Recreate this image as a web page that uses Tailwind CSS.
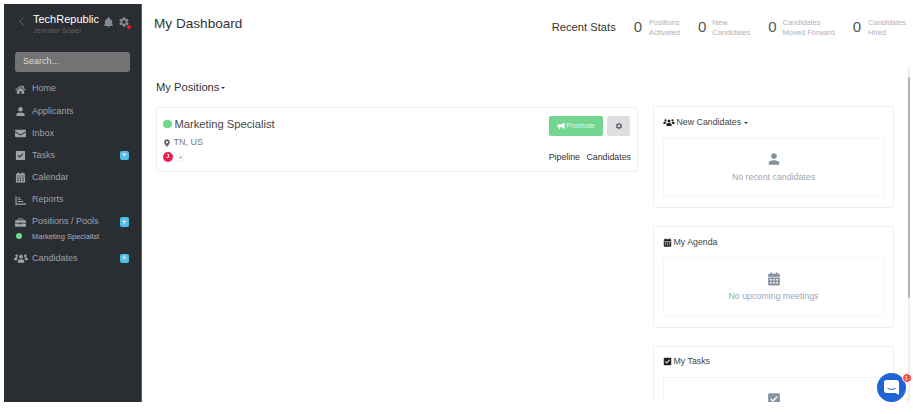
<!DOCTYPE html>
<html lang="en">
<head>
    <meta charset="UTF-8">
    <meta name="viewport" content="width=device-width, initial-scale=1.0">
    <script src="https://cdn.jsdelivr.net/npm/@tailwindcss/browser@4"></script>
    <title>My Dashboard</title>
</head>
<body class="bg-white font-['Liberation_Sans',Arial,sans-serif] overflow-hidden">

    <!-- icon sprite -->
    <svg class="hidden">
        <symbol id="i-home" viewBox="0 0 24 24"><path d="M12 3 0.5 12.6l1.3 1.6L12 5.8l10.2 8.4 1.3-1.6L19 8.9V4h-3v2.4zM4 14.6V21.5h6v-6h4v6h6v-6.9L12 8z"/></symbol>
        <symbol id="i-user" viewBox="0 0 24 24"><path d="M12 12c2.8 0 5-2.2 5-5s-2.2-5-5-5-5 2.200-5 5 2.200 5 5 5zm0 2c-4 0-9 1.800-9 4.500V22h18v-3.500c0-2.700-5-4.500-9-4.500z"/></symbol>
        <symbol id="i-mail" viewBox="0 0 24 24"><path d="M22 4H2C.9 4 0 4.900 0 6v1l12 7 12-7V6c0-1.100-.9-2-2-2zM0 9.500V18c0 1.100.9 2 2 2h20c1.100 0 2-.9 2-2V9.500l-12 7z"/></symbol>
        <symbol id="i-check" viewBox="0 0 24 24"><path d="M20 2H4C2.900 2 2 2.900 2 4v16c0 1.100.9 2 2 2h16c1.100 0 2-.9 2-2V4c0-1.100-.9-2-2-2zm-10 15-4.500-4.500 1.600-1.600 2.900 2.900 6.900-6.900 1.600 1.600z"/></symbol>
        <symbol id="i-cal" viewBox="0 0 24 24"><path fill-rule="evenodd" d="M6 1h3v2h6V1h3v2h2c1.100 0 2 .9 2 2v3H2V5c0-1.100.9-2 2-2h2zM2 9.500h20V21c0 1.100-.9 2-2 2H4c-1.100 0-2-.9-2-2zM5 12v2.500h3V12zm5.500 0v2.500h3V12zm5.500 0v2.500h3V12zM5 17v2.500h3V17zm5.500 0v2.500h3V17zm5.500 0v2.500h3V17z"/></symbol>
        <symbol id="i-chart" viewBox="0 0 24 24"><path d="M1 3h2.500v15.500H24V21H1zM6 13h12v2H6zm0-4h8v2H6zm0-4h5v2H6z"/></symbol>
        <symbol id="i-case" viewBox="0 0 24 24"><path fill-rule="evenodd" d="M8 3h8c1.100 0 2 .9 2 2v2h4c1.100 0 2 .9 2 2v3.500H0V9c0-1.100.9-2 2-2h4V5c0-1.100.9-2 2-2zm0 2v2h8V5zM0 14h9.500v2h5v-2H24v5c0 1.100-.9 2-2 2H2c-1.100 0-2-.9-2-2z"/></symbol>
        <symbol id="i-users" viewBox="0 0 30 24"><circle cx="15" cy="8" r="4"/><circle cx="5.500" cy="6" r="3"/><circle cx="24.500" cy="6" r="3"/><path d="M8 21v-3.500C8 15 11 13.500 15 13.500s7 1.500 7 4V21zM0 16v-3c0-1.800 2-3 5.500-3 1.200 0 2.200.2 3 .5-1.500 1-2.500 2.800-2.500 5.500zM30 16v-3c0-1.800-2-3-5.500-3-1.200 0-2.200.2-3 .5 1.500 1 2.500 2.800 2.500 5.500z"/></symbol>
        <symbol id="i-bell" viewBox="0 0 24 24"><path d="M12 23c1.400 0 2.500-1.100 2.500-2.500h-5C9.500 21.900 10.600 23 12 23zm8-6.500V11c0-3.600-2.200-6.500-5.500-7.300V3c0-1.400-1.100-2.500-2.500-2.500S9.500 1.600 9.500 3v.7C6.200 4.500 4 7.400 4 11v5.500L1.500 19v.5h21V19z"/></symbol>
        <symbol id="i-cog" viewBox="0 0 24 24"><path d="M19.140 12.940c.04-.3.06-.61.06-.94 0-.32-.02-.64-.07-.94l2.030-1.580c.18-.14.23-.41.12-.61l-1.920-3.320c-.12-.22-.37-.29-.59-.22l-2.390.96c-.5-.38-1.030-.7-1.620-.94l-.36-2.540c-.04-.24-.24-.41-.48-.41h-3.840c-.24 0-.43.17-.47.41l-.36 2.540c-.59.24-1.130.57-1.620.94l-2.390-.96c-.22-.08-.47 0-.59.22L2.740 8.870c-.12.21-.08.47.12.61l2.030 1.580c-.05.3-.09.63-.09.94s.02.64.07.94l-2.030 1.580c-.18.14-.23.41-.12.61l1.920 3.320c.12.22.37.29.59.22l2.390-.96c.5.38 1.030.7 1.620.94l.36 2.540c.05.24.24.41.48.41h3.840c.24 0 .44-.17.47-.41l.36-2.540c.59-.24 1.130-.56 1.620-.94l2.390.96c.22.08.47 0 .59-.22l1.920-3.320c.12-.22.07-.47-.12-.61l-2.010-1.580zM12 15.600c-1.980 0-3.600-1.620-3.600-3.600s1.620-3.600 3.600-3.600 3.600 1.620 3.600 3.600-1.620 3.600-3.600 3.600z"/></symbol>
        <symbol id="i-pin" viewBox="0 0 24 24"><path d="M12 1C7.200 1 3.500 4.700 3.500 9.500 3.500 15 12 23.500 12 23.500S20.500 15 20.500 9.500C20.500 4.700 16.800 1 12 1zm0 11.500c-1.700 0-3-1.300-3-3s1.300-3 3-3 3 1.300 3 3-1.300 3-3 3z"/></symbol>
        <symbol id="i-horn" viewBox="0 0 24 24"><path d="M22 2h-1.500L15 6.500H3c-1.100 0-2 .9-2 2v5c0 1.100.9 2 2 2h1.500L6.500 22h3.500l-1.800-6.500H15l5.500 4.500H22c.6 0 1-.4 1-1V3c0-.6-.4-1-1-1z"/></symbol>
    </svg>

    <div class="flex h-[414px] pt-[4px] pb-[12px] pl-[4px]">

        <!-- sidebar -->
        <aside class="w-[138px] shrink-0 bg-[#2a2d32] border-r border-[#5c6064] text-[#9fa4a8] text-[9px]">
            <div class="flex h-[48px] pl-[15px] pr-[11px] pt-[9px]">
                <svg class="w-[5px] h-[10px] mt-[3px] text-[#636a72]" viewBox="0 0 6 11" fill="none" stroke="currentColor" stroke-width="1.2"><path d="M5.500.5.800 5.500l4.700 5"/></svg>
                <div class="ml-[9px]">
                    <div class="text-[11px] leading-[12px] text-white">TechRepublic</div>
                    <div class="text-[7.5px] leading-[9px] mt-[1px] text-[#5d6267]">Jennifer Soper</div>
                </div>
                <div class="ml-auto flex gap-[4px] mt-[3px] h-[12px] text-[#85888c]">
                    <svg class="w-[11px] h-[11px] mt-[1px] fill-current"><use href="#i-bell"/></svg>
                    <div class="relative">
                        <svg class="w-[12px] h-[12px] fill-current"><use href="#i-cog"/></svg>
                        <span class="absolute right-[-1px] bottom-[-1px] w-[4px] h-[4px] rounded-full bg-[#f01c1c]"></span>
                    </div>
                </div>
            </div>
            <div class="mx-[11px] h-[20px] rounded-[3px] bg-[#737373] pl-[8px] leading-[19px] text-[#dcdcdc]">Search...</div>

            <nav class="mt-[6px]">
                <a class="flex items-center h-[22.2px] pl-[11px] pr-[12px]"><svg class="w-[11px] h-[11px] fill-current"><use href="#i-home"/></svg><span class="ml-[6px]">Home</span></a>
                <a class="flex items-center h-[22.2px] pl-[11px] pr-[12px]"><svg class="w-[11px] h-[11px] fill-current"><use href="#i-user"/></svg><span class="ml-[6px]">Applicants</span></a>
                <a class="flex items-center h-[22.2px] pl-[11px] pr-[12px]"><svg class="w-[11px] h-[11px] fill-current"><use href="#i-mail"/></svg><span class="ml-[6px]">Inbox</span></a>
                <a class="flex items-center h-[22.2px] pl-[11px] pr-[12px]"><svg class="w-[11px] h-[11px] fill-current"><use href="#i-check"/></svg><span class="ml-[6px]">Tasks</span><span class="ml-auto flex items-center justify-center w-[9.5px] h-[9.5px] rounded-[2px] bg-[#4fc0ea] text-white text-[9px] leading-none">+</span></a>
                <a class="flex items-center h-[22.2px] pl-[11px] pr-[12px]"><svg class="w-[11px] h-[11px] fill-current"><use href="#i-cal"/></svg><span class="ml-[6px]">Calendar</span></a>
                <a class="flex items-center h-[22.2px] pl-[11px] pr-[12px]"><svg class="w-[11px] h-[11px] fill-current"><use href="#i-chart"/></svg><span class="ml-[6px]">Reports</span></a>
                <a class="flex items-center h-[22.2px] pl-[11px] pr-[12px]"><svg class="w-[11px] h-[11px] fill-current"><use href="#i-case"/></svg><span class="ml-[6px]">Positions / Pools</span><span class="ml-auto flex items-center justify-center w-[9.5px] h-[9.5px] rounded-[2px] bg-[#4fc0ea] text-white text-[9px] leading-none">+</span></a>
                <a class="flex items-center h-[14px] -mt-[4px] mb-[4px] pl-[12px]"><span class="w-[6px] h-[6px] rounded-full bg-[#6fdc8c]"></span><span class="ml-[10px] text-[7.5px] text-[#aab0bd]">Marketing Specialist</span></a>
                <a class="flex items-center h-[22.2px] pl-[10px] pr-[12px]"><svg class="w-[14px] h-[11px] fill-current"><use href="#i-users"/></svg><span class="ml-[4px]">Candidates</span><span class="ml-auto flex items-center justify-center w-[9.5px] h-[9.5px] rounded-[2px] bg-[#4fc0ea] text-white text-[9px] leading-none">+</span></a>
            </nav>
        </aside>

        <!-- main -->
        <div class="flex-1 flex flex-col min-w-0">
            <header class="flex justify-between h-[62px] pl-[12px] pr-[7px] shrink-0">
                <h1 class="mt-[11px] text-[13.6px] leading-[18px] text-[#333]">My Dashboard</h1>
                <div class="flex gap-[18px] mt-[14px] h-[18px] items-center">
                    <span class="text-[11.2px] text-[#333]">Recent Stats</span>
                    <div class="flex items-center gap-[7px]">
                        <span class="text-[15px] text-[#555]">0</span>
                        <span class="mt-[2px] text-[7.5px] leading-[10px] text-[#aab2bd]">Positions<br>Activated</span>
                    </div>
                    <div class="flex items-center gap-[6px]">
                        <span class="text-[15px] text-[#555]">0</span>
                        <span class="mt-[2px] text-[7.5px] leading-[10px] text-[#aab2bd]">New<br>Candidates</span>
                    </div>
                    <div class="flex items-center gap-[6px]">
                        <span class="text-[15px] text-[#555]">0</span>
                        <span class="mt-[2px] text-[7.5px] leading-[10px] text-[#aab2bd]">Candidates<br>Moved Forward</span>
                    </div>
                    <div class="flex items-center gap-[7px]">
                        <span class="text-[15px] text-[#555]">0</span>
                        <span class="mt-[2px] text-[7.5px] leading-[10px] text-[#aab2bd]">Candidates<br>Hired</span>
                    </div>
                </div>
            </header>

            <div class="flex-1 flex min-h-0">
                <div class="flex-1 flex gap-[15px] pl-[14px] overflow-hidden">

                    <!-- positions -->
                    <section class="w-[482px] shrink-0">
                        <div class="flex items-center h-[14px] mt-[14px] text-[11.2px] text-[#333]">My Positions<span class="ml-[2px] mt-[1px] border-x-[2px] border-t-[2px] border-x-transparent border-t-[#333]"></span></div>
                        <div class="mt-[13px] h-[65px] border border-[#eeeeee] rounded-[3px] pl-[6px] pr-[6px] flex justify-between">
                            <div class="pt-[8px]">
                                <div class="flex items-center h-[16px] text-[11.2px] text-[#444]"><span class="w-[8.5px] h-[8.5px] rounded-full bg-[#72d68f]"></span><span class="ml-[3px]">Marketing Specialist</span></div>
                                <div class="flex items-center h-[12px] mt-[5px] text-[9px] text-[#777]"><svg class="w-[8px] h-[10px] fill-[#666]"><use href="#i-pin"/></svg><span class="ml-[2.5px]">TN, US</span></div>
                                <div class="flex items-center mt-[3px]">
                                    <span class="flex items-center justify-center w-[10px] h-[10px] rounded-full bg-[#e91e50] text-white text-[5px] font-bold">J</span>
                                    <span class="flex items-center justify-center w-[9px] h-[9px] ml-[3px] rounded-full border border-[#f2f2f2] text-[#8a94a0] text-[7px] leading-none">+</span>
                                </div>
                            </div>
                            <div class="flex flex-col items-end pt-[8px]">
                                <div class="flex gap-[4px] pr-[1px]">
                                    <span class="flex items-center justify-center w-[54px] h-[20px] rounded-[2px] bg-[#72d68f] text-[#e4f7ea] text-[7.5px]"><svg class="w-[8px] h-[8px] fill-white mr-[1px]"><use href="#i-horn"/></svg>Promote</span>
                                    <span class="flex items-center justify-center w-[23px] h-[20px] rounded-[2px] bg-[#dedede]"><svg class="w-[8px] h-[8px] fill-[#5f6b78]"><use href="#i-cog"/></svg></span>
                                </div>
                                <div class="flex gap-[6.5px] mt-[15px] text-[8.8px] text-[#333]"><span>Pipeline</span><span>Candidates</span></div>
                            </div>
                        </div>
                    </section>

                    <!-- widgets -->
                    <section class="w-[241px] shrink-0 pt-[40px] flex flex-col gap-[18px]">
                        <div class="h-[102px] shrink-0 border border-[#eeeeee] rounded-[3px] px-[8.5px] pt-[9px]">
                            <div class="flex items-center h-[13px] text-[8.8px] text-[#444]"><svg class="w-[12px] h-[9px] fill-[#222]"><use href="#i-users"/></svg><span class="ml-[2px]">New Candidates</span><span class="ml-[3px] mt-[1px] border-x-[2px] border-t-[2px] border-x-transparent border-t-[#333]"></span></div>
                            <div class="mt-[9px] h-[58px] border border-[#f4f4f4] flex flex-col items-center pt-[13px]">
                                <svg class="w-[14px] h-[14px] fill-[#84919f]"><use href="#i-user"/></svg>
                                <span class="mt-[5px] text-[8.8px] text-[#9ea8b3]">No recent candidates</span>
                            </div>
                        </div>
                        <div class="h-[102px] shrink-0 border border-[#eeeeee] rounded-[3px] px-[8.5px] pt-[9px]">
                            <div class="flex items-center h-[13px] text-[8.8px] text-[#444]"><svg class="w-[9px] h-[9px] fill-[#222]"><use href="#i-cal"/></svg><span class="ml-[2px]">My Agenda</span></div>
                            <div class="mt-[8px] h-[59px] border border-[#f6f6f6] flex flex-col items-center pt-[14px]">
                                <svg class="w-[14px] h-[14px] fill-[#84919f]"><use href="#i-cal"/></svg>
                                <span class="mt-[4px] text-[8.8px] text-[#93a8c0]">No upcoming meetings</span>
                            </div>
                        </div>
                        <div class="h-[102px] shrink-0 border border-[#eeeeee] rounded-[3px] px-[8.5px] pt-[8px]">
                            <div class="flex items-center h-[13px] text-[8.8px] text-[#444]"><svg class="w-[9px] h-[9px] fill-[#222]"><use href="#i-check"/></svg><span class="ml-[2px]">My Tasks</span></div>
                            <div class="mt-[9px] h-[59px] border border-[#f4f4f4] flex flex-col items-center pt-[14px]">
                                <svg class="w-[14px] h-[14px] fill-[#84919f]"><use href="#i-check"/></svg>
                            </div>
                        </div>
                    </section>
                </div>

                <!-- scrollbar -->
                <div class="w-[2px] mr-[3px] shrink-0 bg-[#eeeeee] pt-[11px]">
                    <div class="h-[221px] bg-[#b5b5b5]"></div>
                </div>
            </div>
        </div>
    </div>

    <!-- chat launcher -->
    <div class="fixed left-[876.5px] top-[372.5px] w-[29px] h-[29px] rounded-full bg-[#1f63d6] flex items-center justify-center">
        <svg class="w-[15px] h-[15px]" viewBox="0 0 15 15"><path fill="#fff" d="M2.500 0h10A2.500 2.500 0 0 1 15 2.500V15l-3.500-2h-9A2.500 2.500 0 0 1 0 10.500v-8A2.500 2.500 0 0 1 2.500 0z"/><path fill="none" stroke="#1f63d6" d="M3.500 8.500q4 2 8 0"/></svg>
        <span class="absolute right-[-6px] top-[0px] w-[10px] h-[10px] rounded-full bg-[#ff4d4d] border border-white text-white text-[6px] leading-[8px] text-center">1</span>
    </div>

</body>
</html>
